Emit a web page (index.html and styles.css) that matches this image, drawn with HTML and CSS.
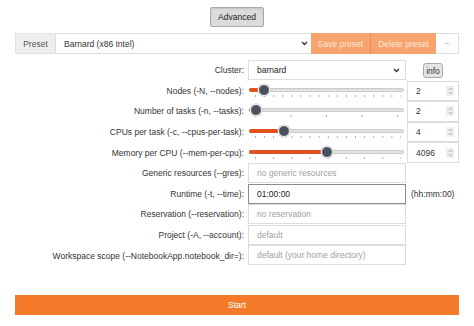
FILE: index.html
```html
<!DOCTYPE html>
<html>
<head>
<meta charset="utf-8">
<link rel="stylesheet" href="styles.css">
</head>
<body>
<div class="top"><button class="adv">Advanced</button></div>
<div class="preset">
  <div class="preset-label">Preset</div>
  <div class="preset-select"><span>Barnard (x86 Intel)</span><span class="chev"><svg width="7" height="5" viewBox="0 0 7 5"><path d="M1 1 L3.5 3.5 L6 1" fill="none" stroke="#333" stroke-width="1.3"/></svg></span></div>
  <div class="pbtn save">Save preset</div>
  <div class="pbtn del">Delete preset</div>
  <div class="more">···</div>
</div>
<div class="form">
  <div class="lab">Cluster:</div>
  <div class="sel"><span>barnard</span><svg width="7" height="5" viewBox="0 0 7 5"><path d="M1 1 L3.5 3.5 L6 1" fill="none" stroke="#333" stroke-width="1.3"/></svg></div>
  <div class="extra center"><button class="info">info</button></div>

  <div class="lab">Nodes (-N, --nodes):</div>
  <div class="slider" style="--v:0.056"><div class="track"><div class="fill"></div><div class="thumb"></div></div><div class="ticks" style="background-size:9.1px 2px"></div></div>
  <div class="num"><span>2</span><span class="spin"><svg width="5" height="8" viewBox="0 0 5 8"><path d="M0.8 3 L2.5 1.2 L4.2 3 M0.8 5 L2.5 6.8 L4.2 5" fill="none" stroke="#999" stroke-width="0.8"/></svg></span></div>

  <div class="lab">Number of tasks (-n, --tasks):</div>
  <div class="slider" style="--v:0"><div class="track"><div class="fill"></div><div class="thumb"></div></div><div class="ticks" style="background-size:35.5px 2px"></div></div>
  <div class="num"><span>2</span><span class="spin"><svg width="5" height="8" viewBox="0 0 5 8"><path d="M0.8 3 L2.5 1.2 L4.2 3 M0.8 5 L2.5 6.8 L4.2 5" fill="none" stroke="#999" stroke-width="0.8"/></svg></span></div>

  <div class="lab">CPUs per task (-c, --cpus-per-task):</div>
  <div class="slider" style="--v:0.196"><div class="track"><div class="fill"></div><div class="thumb"></div></div><div class="ticks" style="background-size:9.1px 2px"></div></div>
  <div class="num"><span>4</span><span class="spin"><svg width="5" height="8" viewBox="0 0 5 8"><path d="M0.8 3 L2.5 1.2 L4.2 3 M0.8 5 L2.5 6.8 L4.2 5" fill="none" stroke="#999" stroke-width="0.8"/></svg></span></div>

  <div class="lab">Memory per CPU (--mem-per-cpu):</div>
  <div class="slider" style="--v:0.5"><div class="track"><div class="fill"></div><div class="thumb"></div></div><div class="ticks" style="background-size:18.2px 2px"></div></div>
  <div class="num"><span>4096</span><span class="spin"><svg width="5" height="8" viewBox="0 0 5 8"><path d="M0.8 3 L2.5 1.2 L4.2 3 M0.8 5 L2.5 6.8 L4.2 5" fill="none" stroke="#999" stroke-width="0.8"/></svg></span></div>

  <div class="lab">Generic resources (--gres):</div>
  <div class="txt ph">no generic resources</div>
  <div class="extra"></div>

  <div class="lab">Runtime (-t, --time):</div>
  <div class="txt dark">01:00:00</div>
  <div class="extra hint">(hh:mm:00)</div>

  <div class="lab">Reservation (--reservation):</div>
  <div class="txt ph">no reservation</div>
  <div class="extra"></div>

  <div class="lab">Project (-A, --account):</div>
  <div class="txt ph">default</div>
  <div class="extra"></div>

  <div class="lab">Workspace scope (--NotebookApp.notebook_dir=):</div>
  <div class="txt ph">default (your home directory)</div>
  <div class="extra"></div>
</div>
<div class="start">Start</div>
</body>
</html>
```
FILE: styles.css
```css
* { box-sizing: border-box; }
body {
  margin: 0;
  width: 474px;
  height: 326px;
  background: #fff;
  font-family: "Liberation Sans", Arial, sans-serif;
  font-size: 8.5px;
  color: #333;
  overflow: hidden;
}
.top {
  padding-top: 7px;
  display: flex;
  justify-content: center;
}
.adv {
  width: 54px;
  height: 20px;
  background: #dcdcdc;
  border: 1px solid #a9a9a9;
  border-radius: 2px;
  box-shadow: inset 0 1px 2px rgba(0,0,0,0.12);
  font-family: inherit;
  font-size: 8.5px;
  color: #222;
  padding: 0;
}
.preset {
  margin: 6px 15px 0 15px;
  height: 21px;
  display: flex;
  border: 1px solid #e0e0e0;
}
.preset-label {
  width: 40px;
  background: #eee;
  border-right: 1px solid #ddd;
  display: flex;
  align-items: center;
  justify-content: center;
  color: #555;
}
.preset-select {
  flex: 1;
  display: flex;
  align-items: center;
  justify-content: space-between;
  padding: 0 3px 0 8px;
  color: #333;
}
.chev { display: flex; }
.pbtn {
  display: flex;
  align-items: center;
  justify-content: center;
  background: #f6a36d;
  color: #fde9dc;
  margin: -1px 0;
}
.save { width: 59px; }
.del { width: 66px; border-left: 1px solid #e58a50; }
.more {
  width: 22px;
  display: flex;
  align-items: center;
  justify-content: center;
  color: #777;
  font-size: 7px;
  letter-spacing: -0.5px;
}
.form {
  margin: 6px 0 0 15px;
  display: grid;
  grid-template-columns: 233px 158px 53px;
  grid-template-rows: repeat(10, 20.6px);
}
.lab {
  padding-right: 4px;
  display: flex;
  align-items: center;
  justify-content: flex-end;
  color: #333;
  white-space: nowrap;
}
.sel {
  border: 1px solid #ddd;
  display: flex;
  align-items: center;
  justify-content: space-between;
  padding: 0 5px 0 8px;
  color: #222;
  height: 20px;
}
.extra {
  display: flex;
  align-items: center;
  padding-left: 4px;
}
.center { justify-content: center; padding-left: 0; padding-top: 1px; }
.info {
  width: 20px;
  height: 15px;
  padding: 0;
  background: #e4e4e8;
  border: 1px solid #aaa;
  border-radius: 3px;
  font-family: inherit;
  font-size: 8.5px;
  color: #333;
  margin-left: 1px;
}
.slider {
  padding: 0 2px 0 1px;
  display: flex;
  flex-direction: column;
  justify-content: center;
}
.track {
  position: relative;
  height: 4px;
  background: #e2e2e2;
  border: 1px solid #ccc;
  border-radius: 2px;
  margin-top: 3px;
}
.fill {
  position: absolute;
  left: -1px;
  top: -1px;
  bottom: -1px;
  width: calc(var(--v) * (100% - 12px) + 7px);
  background: #e4521c;
  border-radius: 2px;
}
.thumb {
  position: absolute;
  top: 50%;
  left: calc(var(--v) * (100% - 12px));
  width: 12px;
  height: 12px;
  transform: translate(0, -50%);
  background: #4c5160;
  border: 1px solid #fff;
  border-radius: 50%;
  box-shadow: 0 0 0 0.5px #bbb;
}
.ticks {
  height: 2px;
  margin: 3px 3px 0 6px;
  background-image: linear-gradient(to right, #aaa 0, #aaa 0.8px, transparent 0.8px);
  background-repeat: repeat-x;
}
.num {
  border: 1px solid #ddd;
  display: flex;
  align-items: center;
  justify-content: space-between;
  padding: 0 4px 0 8px;
  color: #333;
  margin-left: 1px;
}
.spin {
  width: 8px;
  height: 10px;
  background: #eee;
  border-radius: 1px;
  display: flex;
  align-items: center;
  justify-content: center;
}
.txt {
  border: 1px solid #ddd;
  display: flex;
  align-items: center;
  padding: 0 8px;
  height: 20px;
}
.ph { color: #a0a0a0; }
.dark { border-color: #8a8a8a; color: #222; }
.hint { color: #333; padding-left: 5px; }
.start {
  margin: 29px 15px 0 15px;
  height: 20px;
  background: #f47a29;
  color: #fff;
  display: flex;
  align-items: center;
  justify-content: center;
}
```
